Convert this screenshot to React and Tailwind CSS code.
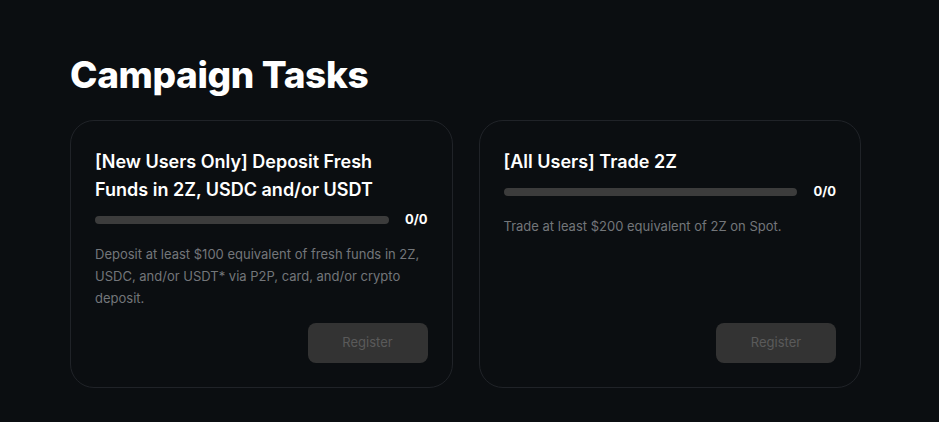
const tasks = [
  {
    title: '[New Users Only] Deposit Fresh Funds in 2Z, USDC and/or USDT',
    desc: 'Deposit at least $100 equivalent of fresh funds in 2Z, USDC, and/or USDT* via P2P, card, and/or crypto deposit.',
  },
  {
    title: '[All Users] Trade 2Z',
    desc: 'Trade at least $200 equivalent of 2Z on Spot.',
  },
];

const TaskCard = ({ title, desc }) => (
  <div className="flex flex-col rounded-[24px] border border-[#202328] px-6 pt-[27px] pb-[24px]">
    <h3 className="text-[18px] leading-[28px] font-semibold text-white pr-4">{title}</h3>
    <div className="mt-[6px] flex h-5 items-center gap-4">
      <div className="h-2 flex-1 rounded-full bg-[#3c3c3c]" />
      <span className="text-[13px] font-bold text-white">0/0</span>
    </div>
    <p className="mt-[13px] text-[13px] leading-[22px] text-[#73767a]">{desc}</p>
    <div className="mt-auto flex justify-end pt-[14px]">
      <button className="h-10 w-[120px] rounded-lg bg-[#333333] text-[13px] text-[#5a5a5a]">
        Register
      </button>
    </div>
  </div>
);

const App = () => {
  return (
    <div
      className="min-h-screen bg-[#0b0e11] px-[70px] pt-[53px]"
      style={{ fontFamily: 'Inter, "Open Sans", sans-serif' }}
    >
      <h1 className="text-[37px] leading-[43px] font-extrabold tracking-[-0.01em] text-white">
        Campaign Tasks
      </h1>
      <div className="mt-[24px] grid w-[791px] grid-cols-2 gap-[26px]">
        {tasks.map((t) => (
          <TaskCard key={t.title} {...t} />
        ))}
      </div>
    </div>
  );
};

export default App;
